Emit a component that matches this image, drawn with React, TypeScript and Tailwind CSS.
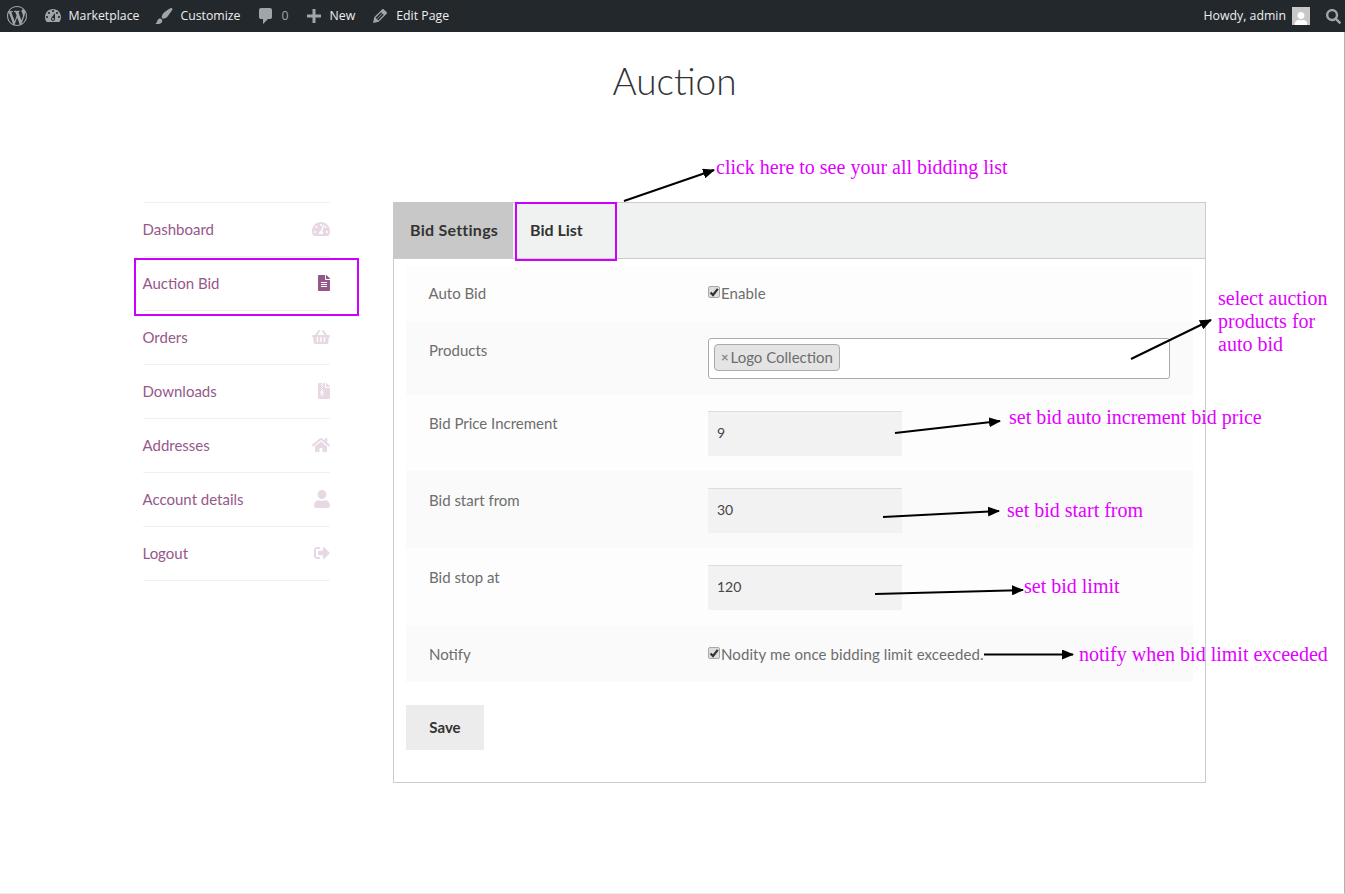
import React from "react";
import { FaFileAlt, FaFileArchive, FaHome, FaShoppingBasket, FaSignOutAlt, FaTachometerAlt, FaUser, FaSearch } from "react-icons/fa";

const menu = [
  { label: "Dashboard", Icon: FaTachometerAlt, size: "h-[18px] w-[18px]" },
  { label: "Auction Bid", Icon: FaFileAlt, size: "h-[16px] w-[12px]", active: true },
  { label: "Orders", Icon: FaShoppingBasket, size: "h-[18px] w-[18px]" },
  { label: "Downloads", Icon: FaFileArchive, size: "h-[16px] w-[12px]" },
  { label: "Addresses", Icon: FaHome, size: "h-[18px] w-[18px]" },
  { label: "Account details", Icon: FaUser, size: "h-[18px] w-[16px]" },
  { label: "Logout", Icon: FaSignOutAlt, size: "h-[16px] w-[16px]" },
];

function Dash({ d }: { d: string }) {
  return (
    <svg viewBox="0 0 20 20" className="size-[20px] fill-[#a0a5aa]">
      <path d={d} />
    </svg>
  );
}

const wpLogo = "M20 10c0-5.51-4.49-10-10-10C4.48 0 0 4.49 0 10c0 5.52 4.48 10 10 10 5.51 0 10-4.48 10-10zM7.78 15.37L4.37 6.22c.55-.02 1.17-.08 1.17-.08.5-.06.44-1.13-.06-1.11 0 0-1.45.11-2.37.11-.18 0-.37 0-.58-.01C4.12 2.69 6.87 1.11 10 1.11c2.33 0 4.45.87 6.05 2.34-.68-.11-1.65.39-1.65 1.58 0 .74.45 1.36.9 2.1.35.61.55 1.36.55 2.46 0 1.49-1.4 5-1.4 5l-3.03-8.37c.54-.02.82-.17.82-.17.5-.05.44-1.25-.06-1.22 0 0-1.44.12-2.38.12-.87 0-2.33-.12-2.33-.12-.5-.03-.56 1.2-.06 1.22l.92.08 1.26 3.41zM17.41 10c.24-.64.74-1.87.43-4.25.7 1.29 1.05 2.71 1.05 4.25 0 3.29-1.73 6.24-4.4 7.78.97-2.59 1.94-5.2 2.92-7.78zM6.1 18.09C3.12 16.65 1.11 13.53 1.11 10c0-1.3.23-2.48.72-3.59C3.25 10.3 4.67 14.2 6.1 18.09zm4.03-6.63l2.58 6.98c-.86.29-1.76.45-2.71.45-.79 0-1.57-.11-2.29-.33.81-2.38 1.62-4.74 2.42-7.1z";
const gauge = "M3.76 16h12.48c1.1-1.37 1.76-3.11 1.76-5 0-4.42-3.58-8-8-8s-8 3.58-8 8c0 1.89.66 3.63 1.76 5zM10 4c.55 0 1 .45 1 1s-.45 1-1 1-1-.45-1-1 .45-1 1-1zM6 6c.55 0 1 .45 1 1s-.45 1-1 1-1-.45-1-1 .45-1 1-1zm8 0c.55 0 1 .45 1 1s-.45 1-1 1-1-.45-1-1 .45-1 1-1zm-5.37 5.55L12 7v6c0 1.1-.9 2-2 2s-2-.9-2-2c0-.57.24-1.08.63-1.45zM4 10c.55 0 1 .45 1 1s-.45 1-1 1-1-.45-1-1 .45-1 1-1zm12 0c.55 0 1 .45 1 1s-.45 1-1 1-1-.45-1-1 .45-1 1-1zm-5 3c0-.55-.45-1-1-1s-1 .45-1 1 .45 1 1 1 1-.45 1-1z";
const brush = "M18.33 3.57s.27-.8-.31-1.36c-.53-.52-1.22-.24-1.22-.24-.61.3-5.76 3.47-7.67 5.57-.86.96-2.06 3.79-1.09 4.82.92.98 3.96-.17 4.79-1 2.06-2.06 5.21-7.17 5.5-7.79zM1.4 17.65c2.37-1.56 1.46-3.41 3.23-4.64.93-.65 2.22-.62 3.08.29.63.67.8 2.57-.16 3.46-1.57 1.45-4 1.55-6.15.89z";
const comment = "M5 2h9q.82 0 1.41.59T16 4v7q0 .82-.59 1.41T14 13h-2l-5 5v-5H5q-.82 0-1.41-.59T3 11V4q0-.82.59-1.41T5 2z";
const plus = "M17 8.5v3h-5.5V17h-3v-5.5H3v-3h5.5V3h3v5.5z";
const pencil = "M13.89 3.39l2.71 2.72c.46.46.42 1.24.03 1.64l-8.01 8.02-5.56 1.16 1.16-5.58s7.6-7.63 7.99-8.03c.39-.39 1.22-.39 1.68.07zm-2.73 2.79l-5.59 5.61 1.11 1.11 5.54-5.65zm-2.97 8.23l5.58-5.6-1.07-1.08-5.59 5.6z";

function TopItem({ d, label, dim }: { d: string; label: string; dim?: boolean }) {
  return (
    <div className="flex items-center gap-[6px]">
      <Dash d={d} />
      <span className={dim ? "text-[#a0a5aa]" : "text-[#eeeeee]"}>{label}</span>
    </div>
  );
}

function NumberField({ value }: { value: string }) {
  return (
    <input
      readOnly
      value={value}
      className="h-[45px] w-[194px] border-t border-[#dddddd] bg-[#f2f2f2] px-[9px] pb-[3px] text-[14px] text-[#43454b] outline-none"
    />
  );
}

function Check() {
  return (
    <span className="relative mr-px flex size-[12px] -translate-y-px">
      <input type="checkbox" checked readOnly className="size-[12px] appearance-none rounded-[2px] border border-[#a8a8a8] bg-[#dedede]" />
      <svg viewBox="0 0 12 12" className="absolute inset-0 size-[12px] fill-none stroke-[#333333] stroke-[2.2]">
        <path d="M2.5 6.5 L5 9 L9.8 2.8" />
      </svg>
    </span>
  );
}

function Row({ label, alt, h, top, labelClass, children }: { label: string; alt?: boolean; h: string; top: string; labelClass?: string; children: React.ReactNode }) {
  return (
    <div className={`flex ${h} ${top} ${alt ? "bg-[#fafafa]" : "bg-[#fdfdfd]"}`}>
      <div className={`ml-[23px] w-[279px] ${labelClass ?? ""}`}>{label}</div>
      <div className="flex-1">{children}</div>
    </div>
  );
}

export default function App() {
  return (
    <div className="h-[894px] w-full overflow-hidden bg-white font-['Lato',sans-serif] text-[15px] leading-[22px] text-[#6d6d6d]">
      <header className="flex h-[32px] items-center justify-between bg-[#23282d] font-['Open_Sans',sans-serif] text-[12.3px] text-[#eeeeee]">
        <div className="flex items-center">
          <div className="ml-[7px] mr-[15.5px]"><Dash d={wpLogo} /></div>
          <div className="flex items-center gap-[15px]">
            <TopItem d={gauge} label="Marketplace" />
            <TopItem d={brush} label="Customize" />
            <TopItem d={comment} label="0" dim />
            <TopItem d={plus} label="New" />
            <TopItem d={pencil} label="Edit Page" />
          </div>
        </div>
        <div className="flex items-center">
          <span>Howdy, admin</span>
          <span className="ml-[6px] flex size-[18px] items-end justify-center overflow-hidden bg-[#c8c8c8]">
            <FaUser className="size-[14px] translate-y-[1px] text-white" />
          </span>
          <FaSearch className="ml-[16px] mr-[4px] size-[15px] text-[#a0a5aa]" />
        </div>
      </header>

      <div className="relative h-[862px] border-r border-b border-r-[#b0b0b0] border-b-[#eeeeee]">
        <h1 className="pt-[22px] pl-[5px] text-center text-[37px] leading-[54px] font-light text-[#333333]">Auction</h1>

        <main className="mt-[94px] flex pl-[143px]">
          <nav className="w-[187px] border-t border-[#f0f0f0]">
            {menu.map(({ label, Icon, size, active }) => (
              <div key={label} className="flex h-[54px] items-center justify-between border-b border-[#f0f0f0] pb-px text-[#96588a]">
                <span className="-ml-[0.5px]">{label}</span>
                <Icon className={`${size} ${active ? "text-[#96588a]" : "text-[#e7d9e4]"}`} />
              </div>
            ))}
          </nav>

          <section className="ml-[63px] h-[581px] w-[813px] border border-[#cccccc]">
            <div className="flex h-[56px] border-b border-[#cccccc] bg-[#f0f2f2] text-[16px] font-bold text-[#333333]">
              <div className="-mt-px -ml-px flex h-[56px] w-[120px] items-center bg-[#c8c8c8] pl-[17px] tracking-[0.25px]">Bid Settings</div>
              <div className="ml-[17px] flex h-[54px] items-center">
                <span>Bid List</span>
              </div>
            </div>
            <div className="px-[12px] pt-[7px]">
              <Row label="Auto Bid" h="h-[56px]" top="items-start pt-[16px]" labelClass="-translate-x-[0.5px]">
                <label className="flex items-center tracking-[0.1px]"><Check />Enable</label>
              </Row>
              <Row label="Products" alt h="h-[73px]" top="items-start pt-[17px]">
                <div className="-mt-px flex h-[41px] w-[462px] items-start rounded-[3px] border border-[#aaaaaa] bg-white pt-[5px] pl-[5px]">
                  <span className="flex h-[27px] items-center gap-[2px] rounded-[4px] border border-[#aaaaaa] bg-[#e4e4e4] px-[6px] pb-px">
                    <span className="text-[13px] font-bold text-[#888888]">×</span>
                    Logo Collection
                  </span>
                </div>
              </Row>
              <Row label="Bid Price Increment" h="h-[76px]" top="items-start pt-[16px]" labelClass="mt-px">
                <NumberField value="9" />
              </Row>
              <Row label="Bid start from" alt h="h-[77px]" top="items-start pt-[17px]" labelClass="mt-px">
                <NumberField value="30" />
              </Row>
              <Row label="Bid stop at" h="h-[78px]" top="items-start pt-[17px]" labelClass="mt-px">
                <NumberField value="120" />
              </Row>
              <Row label="Notify" alt h="h-[56px]" top="items-start pt-[17px]">
                <label className="flex items-center tracking-[0.1px]"><Check />Nodity me once bidding limit exceeded.</label>
              </Row>
              <button className="mt-[23px] h-[45px] w-[78px] bg-[#ececec] pb-[2px] font-bold text-[#333333]">Save</button>
            </div>
          </section>
        </main>
      </div>

      {/* Annotations drawn over the page */}
      <div className="absolute top-[258px] left-[134px] h-[58px] w-[225px] border-2 border-[#cc00ff]" />
      <div className="absolute top-[202px] left-[515px] h-[59px] w-[102px] border-2 border-[#cc00ff]" />

      <svg className="absolute top-0 left-0 h-[894px] w-[1345px]" viewBox="0 0 1345 894" fill="none">
        <defs>
          <marker id="arrow" markerUnits="userSpaceOnUse" markerWidth="12" markerHeight="10" refX="11" refY="5" orient="auto">
            <path d="M0 0 L12 5 L0 10 Z" fill="#000" />
          </marker>
        </defs>
        <g stroke="#000" strokeWidth="2">
          <line x1="624" y1="201" x2="714" y2="170" markerEnd="url(#arrow)" />
          <line x1="1131" y1="359" x2="1211" y2="320" markerEnd="url(#arrow)" />
          <line x1="895" y1="433" x2="1000" y2="421" markerEnd="url(#arrow)" />
          <line x1="883" y1="517" x2="999" y2="511" markerEnd="url(#arrow)" />
          <line x1="875" y1="594" x2="1023" y2="590" markerEnd="url(#arrow)" />
          <line x1="984" y1="654.5" x2="1073" y2="654.5" markerEnd="url(#arrow)" />
        </g>
      </svg>

      <div className="font-['Liberation_Serif',serif] text-[20px] leading-[23px] text-[#e100ff]">
        <span className="absolute top-[156px] left-[716px] whitespace-nowrap">click here to see your all bidding list</span>
        <span className="absolute top-[287px] left-[1218px] whitespace-nowrap">select auction<br />products for<br />auto bid</span>
        <span className="absolute top-[406px] left-[1009px] whitespace-nowrap">set bid auto increment bid price</span>
        <span className="absolute top-[499px] left-[1007px] whitespace-nowrap">set bid start from</span>
        <span className="absolute top-[575px] left-[1024px] whitespace-nowrap">set bid limit</span>
        <span className="absolute top-[643px] left-[1079px] whitespace-nowrap">notify when bid limit exceeded</span>
      </div>
    </div>
  );
}
